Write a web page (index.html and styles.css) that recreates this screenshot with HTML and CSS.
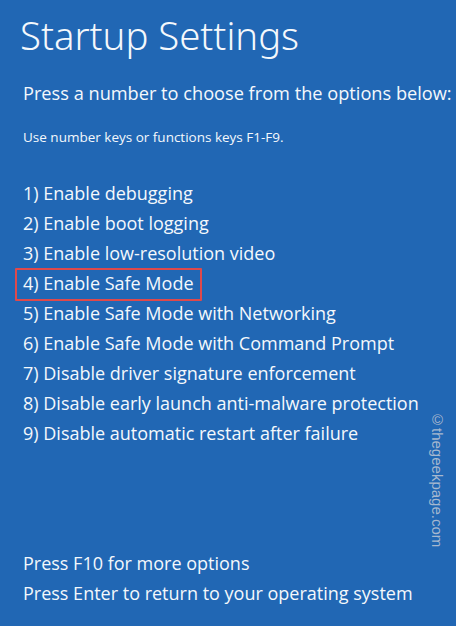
FILE: index.html
```html
<!DOCTYPE html>
<html lang="en">
<head>
<meta charset="utf-8">
<title>Startup Settings</title>
<link rel="stylesheet" href="styles.css">
</head>
<body>
<main class="screen">
  <h1 class="title">Startup Settings</h1>
  <p class="prompt">Press a number to choose from the options below:</p>
  <p class="hint">Use number keys or functions keys F1-F9.</p>
  <ol class="options">
    <li>1) Enable debugging</li>
    <li>2) Enable boot logging</li>
    <li>3) Enable low-resolution video</li>
    <li><span class="highlight">4) Enable Safe Mode</span></li>
    <li>5) Enable Safe Mode with Networking</li>
    <li>6) Enable Safe Mode with Command Prompt</li>
    <li>7) Disable driver signature enforcement</li>
    <li>8) Disable early launch anti-malware protection</li>
    <li>9) Disable automatic restart after failure</li>
  </ol>
  <div class="footer">
    <p>Press F10 for more options</p>
    <p>Press Enter to return to your operating system</p>
  </div>
  <div class="watermark">©thegeekpage.com</div>
</main>
</body>
</html>
```
FILE: styles.css
```css
html, body {
  margin: 0;
  padding: 0;
}
body {
  background: #2167b4;
  font-family: "Open Sans", "Noto Sans", sans-serif;
  color: #f4f8fc;
}
.screen {
  position: relative;
  width: 456px;
  height: 626px;
  box-sizing: border-box;
  padding: 0 0 0 23px;
  display: flex;
  flex-direction: column;
  overflow: hidden;
}
.title {
  margin: 11px 0 0 -3px;
  font-family: "Noto Sans", "Open Sans", sans-serif;
  font-size: 38.3px;
  font-weight: 300;
  line-height: 48px;
  white-space: nowrap;
}
.prompt {
  margin: 21px 0 0;
  font-size: 18.2px;
  line-height: 26px;
  white-space: nowrap;
}
.hint {
  margin: 21px 0 0;
  font-size: 13.5px;
  line-height: 20px;
  white-space: nowrap;
}
.options {
  list-style: none;
  margin: 31px 0 0;
  padding: 0;
  font-size: 18px;
  line-height: 30px;
  white-space: nowrap;
}
.highlight {
  position: relative;
  display: inline-block;
}
.highlight::after {
  content: "";
  position: absolute;
  left: -8px;
  right: -8px;
  top: 0;
  height: 33px;
  border: 2px solid #e0494b;
  border-radius: 1px;
  box-sizing: border-box;
}
.footer {
  margin-top: auto;
  margin-bottom: 18px;
  font-size: 18px;
  line-height: 30px;
}
.footer p {
  margin: 0;
}
.watermark {
  position: absolute;
  left: 429px;
  top: 411px;
  writing-mode: vertical-rl;
  font-size: 15px;
  color: #a6b8cf;
  font-family: "Liberation Sans", sans-serif;
}
```
